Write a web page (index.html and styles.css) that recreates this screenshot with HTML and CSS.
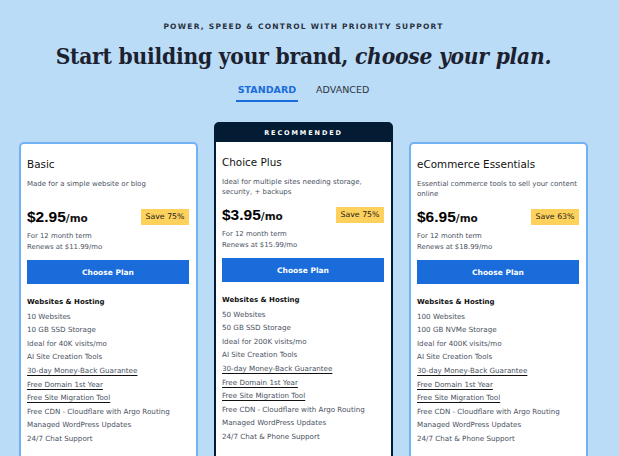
FILE: index.html
```html
<!DOCTYPE html>
<html lang="en">
<head>
<meta charset="utf-8">
<title>Choose your plan</title>
<link rel="stylesheet" href="styles.css">
</head>
<body>
<div class="page">
<header class="hero">
  <p class="eyebrow">POWER, SPEED &amp; CONTROL WITH PRIORITY SUPPORT</p>
  <h1 class="title">Start building your brand, <em>choose your plan.</em></h1>
  <nav class="tabs">
    <span class="tab active">STANDARD</span>
    <span class="tab">ADVANCED</span>
  </nav>
</header>
<main class="plans">
  <section class="card">
    <div class="card-body">
      <h2 class="plan-name">Basic</h2>
      <p class="plan-desc">Made for a simple website or blog</p>
      <div class="price-row">
        <div class="price"><span class="amount">$2.95</span><span class="per">/mo</span></div>
        <span class="save">Save 75%</span>
      </div>
      <p class="terms">For 12 month term<br>Renews at $11.99/mo</p>
      <button class="cta">Choose Plan</button>
      <h3 class="feat-head">Websites &amp; Hosting</h3>
      <ul class="features">
        <li>10 Websites</li>
        <li>10 GB SSD Storage</li>
        <li>Ideal for 40K visits/mo</li>
        <li>AI Site Creation Tools</li>
        <li><span class="u">30-day Money-Back Guarantee</span></li>
        <li><span class="u">Free Domain 1st Year</span></li>
        <li><span class="u">Free Site Migration Tool</span></li>
        <li>Free CDN - Cloudflare with Argo Routing</li>
        <li>Managed WordPress Updates</li>
        <li>24/7 Chat Support</li>
      </ul>
    </div>
  </section>
  <section class="card featured">
    <div class="ribbon">RECOMMENDED</div>
    <div class="card-body">
      <h2 class="plan-name">Choice Plus</h2>
      <p class="plan-desc">Ideal for multiple sites needing storage, security, + backups</p>
      <div class="price-row">
        <div class="price"><span class="amount">$3.95</span><span class="per">/mo</span></div>
        <span class="save">Save 75%</span>
      </div>
      <p class="terms">For 12 month term<br>Renews at $15.99/mo</p>
      <button class="cta">Choose Plan</button>
      <h3 class="feat-head">Websites &amp; Hosting</h3>
      <ul class="features">
        <li>50 Websites</li>
        <li>50 GB SSD Storage</li>
        <li>Ideal for 200K visits/mo</li>
        <li>AI Site Creation Tools</li>
        <li><span class="u">30-day Money-Back Guarantee</span></li>
        <li><span class="u">Free Domain 1st Year</span></li>
        <li><span class="u">Free Site Migration Tool</span></li>
        <li>Free CDN - Cloudflare with Argo Routing</li>
        <li>Managed WordPress Updates</li>
        <li>24/7 Chat &amp; Phone Support</li>
      </ul>
    </div>
  </section>
  <section class="card">
    <div class="card-body">
      <h2 class="plan-name">eCommerce Essentials</h2>
      <p class="plan-desc">Essential commerce tools to sell your content online</p>
      <div class="price-row">
        <div class="price"><span class="amount">$6.95</span><span class="per">/mo</span></div>
        <span class="save">Save 63%</span>
      </div>
      <p class="terms">For 12 month term<br>Renews at $18.99/mo</p>
      <button class="cta">Choose Plan</button>
      <h3 class="feat-head">Websites &amp; Hosting</h3>
      <ul class="features">
        <li>100 Websites</li>
        <li>100 GB NVMe Storage</li>
        <li>Ideal for 400K visits/mo</li>
        <li>AI Site Creation Tools</li>
        <li><span class="u">30-day Money-Back Guarantee</span></li>
        <li><span class="u">Free Domain 1st Year</span></li>
        <li><span class="u">Free Site Migration Tool</span></li>
        <li>Free CDN - Cloudflare with Argo Routing</li>
        <li>Managed WordPress Updates</li>
        <li>24/7 Chat &amp; Phone Support</li>
      </ul>
    </div>
  </section>
</main>
</div>
</body>
</html>
```
FILE: styles.css
```css
* { box-sizing: border-box; }
html, body { margin: 0; padding: 0; }
body {
  background: #badcf7;
  font-family: "DejaVu Sans", "Liberation Sans", sans-serif;
  color: #1a2233;
  overflow: hidden;
  height: 456px;
}
.page {
  width: 607px;
}
.hero {
  display: flex;
  flex-direction: column;
  align-items: center;
  padding-top: 21px;
}
.eyebrow {
  margin: 0;
  font-size: 7.5px;
  line-height: 12px;
  font-weight: bold;
  letter-spacing: 1.25px;
  color: #2a3140;
}
.title {
  margin: 8px 0 0;
  font-family: "DejaVu Serif", "Liberation Serif", serif;
  font-stretch: condensed;
  font-size: 22.5px;
  line-height: 30px;
  font-weight: bold;
  color: #1c2130;
  letter-spacing: -0.2px;
}
.title em { font-style: italic; }
.tabs {
  display: flex;
  gap: 16px;
  margin-top: 12px;
}
.tab {
  font-size: 9.5px;
  line-height: 13px;
  padding: 0 2px 4px;
  color: #2d3340;
  border-bottom: 2px solid transparent;
}
.tab.active {
  color: #1b6cdb;
  font-weight: bold;
  border-bottom-color: #1b6cdb;
}
.plans {
  display: flex;
  justify-content: center;
  align-items: flex-start;
  gap: 16px;
  margin-top: 20px;
}
.card {
  width: 179px;
  flex: none;
  background: #fff;
  border: 2px solid #72b1f4;
  border-radius: 5px;
  margin-top: 20px;
  height: 340px;
}
.card.featured {
  margin-top: 0;
  border-color: #031b33;
  border-radius: 5px 5px 0 0;
}
.ribbon {
  background: #031b33;
  color: #fff;
  font-size: 6.5px;
  font-weight: bold;
  letter-spacing: 1.9px;
  text-align: center;
  line-height: 18px;
  height: 18px;
}
.card-body {
  padding: 13px 7px 0 6px;
}
.plan-name {
  margin: 0;
  font-size: 10.4px;
  line-height: 14px;
  font-weight: normal;
  color: #111;
}
.plan-desc {
  margin: 8px 0 0;
  font-size: 7px;
  line-height: 10px;
  min-height: 20px;
  color: #4a5262;
}
.price-row {
  display: flex;
  align-items: center;
  justify-content: space-between;
  margin-top: 7px;
  height: 20px;
}
.amount {
  font-family: "Liberation Sans", "DejaVu Sans", sans-serif;
  font-size: 15.5px;
  font-weight: bold;
  color: #000;
}
.per {
  font-size: 10.5px;
  font-weight: bold;
  color: #111;
}
.save {
  background: #fdd15c;
  font-size: 7.8px;
  line-height: 16px;
  padding: 0;
  width: 48px;
  text-align: center;
  color: #1a1a1a;
  margin-top: 2px;
}
.terms {
  margin: 5px 0 0;
  font-size: 6.9px;
  line-height: 11px;
  color: #4a5262;
}
.cta {
  display: block;
  width: 100%;
  margin-top: 7px;
  height: 24px;
  border: 0;
  background: #1b6cdb;
  color: #fff;
  font-family: inherit;
  font-size: 7.5px;
  font-weight: bold;
  padding: 0;
}
.feat-head {
  margin: 12px 0 0;
  font-size: 7px;
  line-height: 13.6px;
  font-weight: bold;
  color: #111;
}
.features {
  list-style: none;
  margin: 0;
  padding: 0;
  font-size: 7.15px;
  line-height: 13.6px;
  color: #4a5262;
}
.u {
  text-decoration: underline;
  text-decoration-color: #111;
  text-underline-offset: 1.5px;
}
```
